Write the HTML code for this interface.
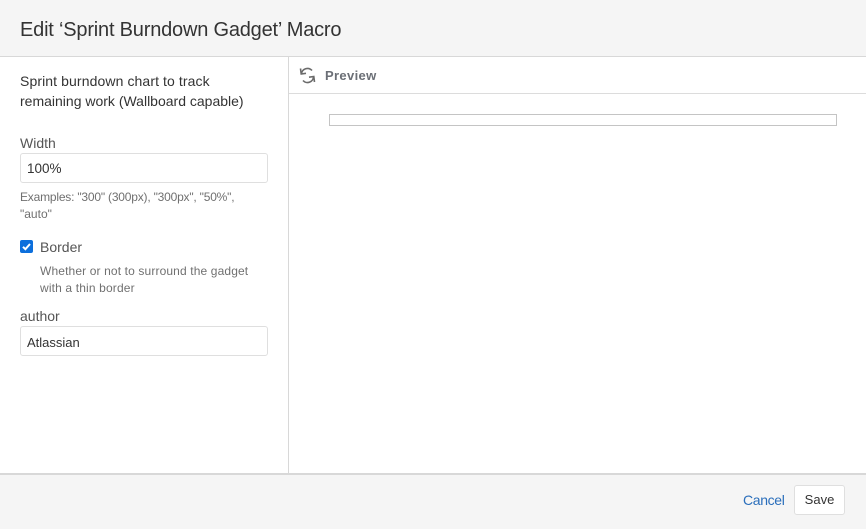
<!DOCTYPE html>
<html><head><meta charset="utf-8"><style>
html,body{margin:0;padding:0;background:#fff}
body{width:866px;height:529px;position:relative;overflow:hidden;font-family:"Liberation Sans",sans-serif;color:#333}
div,a,svg{position:absolute;white-space:nowrap}
.input{left:20px;width:246px;height:28px;border:1px solid #dfdfdf;border-radius:3px;background:#fff;font-size:13px;line-height:29px;text-indent:6px;color:#333}
.t{font-size:14px;line-height:20px}
.s{font-size:12px;line-height:17px;color:#707070}
</style></head><body>
<div style="left:0;top:0;width:866px;height:56px;background:#f5f5f5;border-bottom:1px solid #d8d8d8"></div>
<div style="left:20px;top:16px;font-size:20px;line-height:28px;color:#333;letter-spacing:-0.2px">Edit ‘Sprint Burndown Gadget’ Macro</div>
<div style="left:288px;top:57px;width:1px;height:416px;background:#d8d8d8"></div>
<div style="left:289px;top:93px;width:577px;height:1px;background:#dcdcdc"></div>
<svg style="left:299px;top:67px" width="17" height="17" viewBox="0 0 17 17" fill="none" stroke="#6b6b6b" stroke-width="1.6"><path d="M2.5 7A6 6 0 0 1 13 3.5"/><path d="M1.5 1.5 2.2 7 7 6.3"/><path d="M14.5 9.5A6 6 0 0 1 4 13.5"/><path d="M15.5 15 14.8 9.5 10 10.2"/></svg>
<div style="left:325px;top:67px;font-size:13px;line-height:18px;font-weight:bold;color:#6b6f76;letter-spacing:0.35px">Preview</div>
<div style="left:329px;top:114px;width:506px;height:10px;border:1px solid #c4c4c4"></div>
<div class="t" style="left:20px;top:71px;letter-spacing:0.1px">Sprint burndown chart to track</div>
<div class="t" style="left:20px;top:91px">remaining work (Wallboard capable)</div>
<div class="t" style="left:20px;top:133px;color:#555">Width</div>
<div class="input" style="top:153px;font-size:13.5px">100%</div>
<div class="s" style="left:20px;top:189px;letter-spacing:-0.2px">Examples: "300" (300px), "300px", "50%",</div>
<div class="s" style="left:20px;top:206px">"auto"</div>
<div style="left:20px;top:240px;width:13px;height:13px;background:#0c6fdc;border-radius:2px"></div>
<svg style="left:20px;top:240px" width="13" height="13" viewBox="0 0 13 13" fill="none" stroke="#fff" stroke-width="2"><path d="M3 6.8 5.4 9.2 10 4"/></svg>
<div class="t" style="left:40px;top:237px;color:#555">Border</div>
<div class="s" style="left:40px;top:263px;letter-spacing:0.13px">Whether or not to surround the gadget</div>
<div class="s" style="left:40px;top:280px;letter-spacing:0.15px">with a thin border</div>
<div class="t" style="left:20px;top:306px;color:#555">author</div>
<div class="input" style="top:326px;line-height:31px">Atlassian</div>
<div style="left:0;top:473px;width:866px;height:56px;background:#f5f5f5;border-top:2px solid #d8d8d8;box-sizing:border-box"></div>
<a style="left:743px;top:490px;font-size:14px;line-height:20px;color:#2a6ebb;text-decoration:none;letter-spacing:-0.35px">Cancel</a>
<div style="left:794px;top:485px;width:49px;height:28px;background:#fff;border:1px solid #dfdfdf;border-radius:3px;font-size:13px;line-height:28px;text-align:center;color:#333">Save</div>
</body></html>
